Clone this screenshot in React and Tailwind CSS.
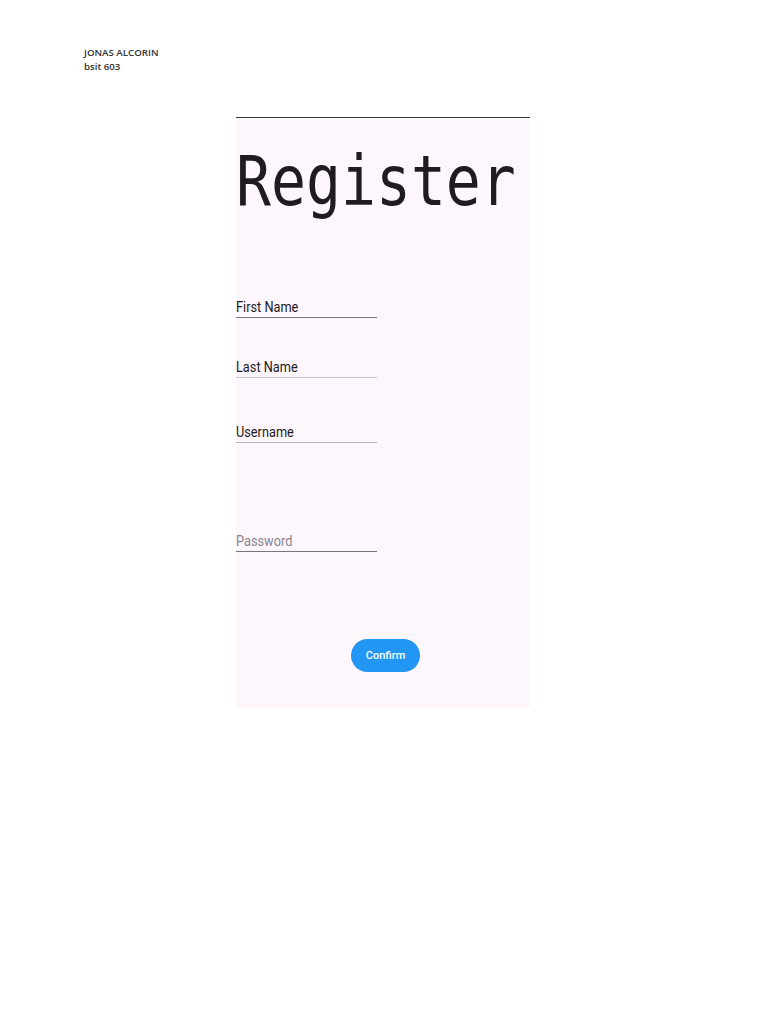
export default function App() {
  const field = (label, extra, line) => (
    <div className={`w-[141px] border-b ${line} ${extra}`}>
      <div className="h-[20px] leading-[20px] text-[15px] origin-left scale-x-[0.85] whitespace-nowrap">
        {label}
      </div>
    </div>
  );
  return (
    <div className="w-[768px] h-[1024px] bg-white relative" style={{ fontFamily: "Roboto, sans-serif" }}>
      <div className="pt-[46px] pl-[84px] text-[9.7px] leading-[14px] font-semibold text-[#333]" style={{ fontFamily: '"Open Sans", sans-serif' }}>
        <div>JONAS ALCORIN</div>
        <div>bsit 603</div>
      </div>
      <div className="ml-[236px] mt-[43px] w-[294px] h-[590px] bg-[#fdf6fd] border-t border-[#3a3a3a]">
        <div
          className="mt-[28px] h-[70px] leading-[70px] text-[70px] text-[#1f1b20] origin-left scale-x-[0.83] whitespace-nowrap"
          style={{ fontFamily: '"DejaVu Sans Mono", monospace' }}
        >
          Register
        </div>
        <div className="mt-[81px]">{field("First Name", "text-[#1d1b20]", "border-[#79747e]")}</div>
        <div className="mt-[39px]">{field("Last Name", "text-[#1d1b20]", "border-[#cac4d0]")}</div>
        <div className="mt-[44px]">{field("Username", "text-[#1d1b20]", "border-[#b8b2bc]")}</div>
        <div className="mt-[88px]">{field("Password", "text-[#8a8590]", "border-[#79747e]")}</div>
        <div className="mt-[87px] ml-[115px] w-[69px] h-[33px] rounded-full bg-[#2196f3] flex items-center justify-center text-white text-[11px] font-medium pt-[2px]">
          Confirm
        </div>
      </div>
    </div>
  );
}
